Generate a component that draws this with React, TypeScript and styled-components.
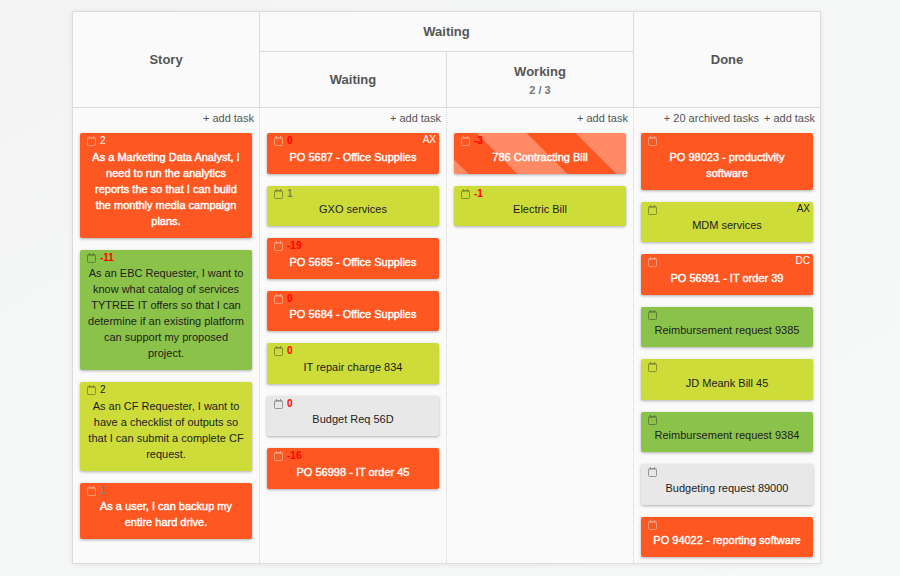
import React from "react";
import styled, { createGlobalStyle, css } from "styled-components";

type Tone = "orange" | "green" | "lime" | "grey";
type DueTone = "plain" | "muted" | "late";

interface Task {
  title: string;
  tone: Tone;
  due?: string;
  dueTone?: DueTone;
  owner?: string;
  blocked?: boolean;
}

interface Column {
  id: string;
  archived?: string;
  tasks: Task[];
}

const columns: Column[] = [
  {
    id: "Story",
    tasks: [
      {
        title:
          "As a Marketing Data Analyst, I need to run the analytics reports the so that I can build the monthly media campaign plans.",
        tone: "orange",
        due: "2",
      },
      {
        title:
          "As an EBC Requester, I want to know what catalog of services TYTREE IT offers so that I can determine if an existing platform can support my proposed project.",
        tone: "green",
        due: "-11",
        dueTone: "late",
      },
      {
        title:
          "As an CF Requester, I want to have a checklist of outputs so that I can submit a complete CF request.",
        tone: "lime",
        due: "2",
      },
      {
        title: "As a user, I can backup my entire hard drive.",
        tone: "orange",
        due: "1",
        dueTone: "muted",
      },
    ],
  },
  {
    id: "Waiting",
    tasks: [
      { title: "PO 5687 - Office Supplies", tone: "orange", due: "0", dueTone: "late", owner: "AX" },
      { title: "GXO services", tone: "lime", due: "1", dueTone: "muted" },
      { title: "PO 5685 - Office Supplies", tone: "orange", due: "-19", dueTone: "late" },
      { title: "PO 5684 - Office Supplies", tone: "orange", due: "0", dueTone: "late" },
      { title: "IT repair charge 834", tone: "lime", due: "0", dueTone: "late" },
      { title: "Budget Req 56D", tone: "grey", due: "0", dueTone: "late" },
      { title: "PO 56998 - IT order 45", tone: "orange", due: "-16", dueTone: "late" },
    ],
  },
  {
    id: "Working",
    tasks: [
      { title: "786 Contracting Bill", tone: "orange", due: "-3", dueTone: "late", blocked: true },
      { title: "Electric Bill", tone: "lime", due: "-1", dueTone: "late" },
    ],
  },
  {
    id: "Done",
    archived: "+ 20 archived tasks",
    tasks: [
      { title: "PO 98023 - productivity software", tone: "orange" },
      { title: "MDM services", tone: "lime", owner: "AX" },
      { title: "PO 56991 - IT order 39", tone: "orange", owner: "DC" },
      { title: "Reimbursement request 9385", tone: "green" },
      { title: "JD Meank Bill 45", tone: "lime" },
      { title: "Reimbursement request 9384", tone: "green" },
      { title: "Budgeting request 89000", tone: "grey" },
      { title: "PO 94022 - reporting software", tone: "orange" },
    ],
  },
];

const fills: Record<Tone, string> = {
  orange: "#ff5722",
  green: "#8bc34a",
  lime: "#cddc39",
  grey: "#e8e8e8",
};

const GlobalStyle = createGlobalStyle`
  * { box-sizing: border-box; }
  body {
    margin: 0;
    min-height: 100vh;
    background: linear-gradient(150deg, #f3f3f3 0%, #f5f6f6 30%, #f7f8f8 100%);
    font-family: "Liberation Sans", Arial, sans-serif;
    font-size: 11px;
    line-height: 16px;
    color: #555;
  }
`;

const Page = styled.main`
  padding: 11px 79px 12px 72px;
`;

const Board = styled.div`
  display: grid;
  grid-template-columns: repeat(4, minmax(0, 1fr));
  grid-template-rows: 40px 56px auto;
  border: 1px solid #dcdcdc;
  border-left: 0;
  background: #fafafa;
  box-shadow: 0 1px 6px rgba(0, 0, 0, 0.08);
`;

const HeaderCell = styled.header<{ $area: string }>`
  grid-area: ${(p) => p.$area};
  display: flex;
  flex-direction: column;
  align-items: center;
  justify-content: center;
  border-left: 1px solid #dcdcdc;
  border-bottom: 1px solid #dcdcdc;
`;

const Heading = styled.h2`
  margin: 0;
  font-size: 13px;
  line-height: 20px;
  font-weight: bold;
`;

const Limit = styled.span`
  font-weight: bold;
  color: #777;
`;

const Lane = styled.section`
  padding: 0 7px 6px;
  border-left: 1px dotted #d4d4d4;

  &:nth-of-type(1) {
    border-left: 1px solid #dcdcdc;
  }
`;

const Actions = styled.div`
  display: flex;
  justify-content: flex-end;
  gap: 5px;
  height: 25px;
  padding-top: 2px;
  margin-right: -2px;
`;

const Action = styled.button`
  height: 16px;
  padding: 0;
  border: 0;
  background: none;
  color: #555;
  font: inherit;
  cursor: pointer;
  white-space: nowrap;
`;

const CardList = styled.div`
  display: flex;
  flex-direction: column;
  gap: 12px;
`;

const CardTop = styled.div`
  display: flex;
  align-items: center;
  gap: 4px;
  height: 16px;
  font-size: 10px;
`;

const Card = styled.article<{ $tone: Tone; $blocked?: boolean }>`
  padding: 0 7px 9px;
  border-radius: 2px;
  background-color: ${(p) => fills[p.$tone]};
  box-shadow: 0 1px 3px rgba(0, 0, 0, 0.3);
  color: ${(p) => (p.$tone === "orange" ? "#fff" : "#222")};
  ${(p) =>
    p.$blocked &&
    css`
      background-image: repeating-linear-gradient(
        45deg,
        rgba(255, 255, 255, 0.3) 0 10px,
        transparent 10px 45px,
        rgba(255, 255, 255, 0.3) 45px 70px
      );
    `}

  &:nth-child(even) ${CardTop} {
    height: 15px;
  }
`;

const CardTitle = styled.p<{ $light: boolean }>`
  margin: 0;
  padding: 0 1px;
  text-align: center;
  -webkit-text-stroke: ${(p) => (p.$light ? "0.4px #fff" : "0")};
`;

const dueColors: Record<DueTone, string> = {
  plain: "inherit",
  muted: "#808066",
  late: "#f00",
};

const Due = styled.span<{ $tone: DueTone }>`
  color: ${(p) => dueColors[p.$tone]};
  font-weight: ${(p) => (p.$tone === "plain" ? "normal" : "bold")};
`;

const Owner = styled.span`
  margin-left: auto;
  margin-right: -4px;
  line-height: 14px;
  align-self: flex-start;
`;

const CalendarIcon = styled.svg`
  flex: none;
  width: 9px;
  height: 10px;
  opacity: 0.45;
`;

function Calendar() {
  return (
    <CalendarIcon viewBox="0 0 9 10" aria-hidden="true">
      <rect x="0.5" y="1.5" width="8" height="8" rx="1" fill="none" stroke="currentColor" strokeWidth="0.9" />
      <path d="M1 2h7v1H1Z" fill="currentColor" opacity="0.6" />
      <path d="M2.5 0v2.4M6.5 0v2.4" stroke="currentColor" strokeWidth="1" />
    </CalendarIcon>
  );
}

function TaskCard({ task }: { task: Task }) {
  return (
    <Card $tone={task.tone} $blocked={task.blocked}>
      <CardTop>
        <Calendar />
        {task.due && <Due $tone={task.dueTone ?? "plain"}>{task.due}</Due>}
        {task.owner && <Owner>{task.owner}</Owner>}
      </CardTop>
      <CardTitle $light={task.tone === "orange"}>{task.title}</CardTitle>
    </Card>
  );
}

export default function App() {
  return (
    <>
      <GlobalStyle />
      <Page>
        <Board>
          <HeaderCell $area="1 / 1 / 3 / 2">
            <Heading>Story</Heading>
          </HeaderCell>
          <HeaderCell $area="1 / 2 / 2 / 4">
            <Heading>Waiting</Heading>
          </HeaderCell>
          <HeaderCell $area="2 / 2 / 3 / 3">
            <Heading>Waiting</Heading>
          </HeaderCell>
          <HeaderCell $area="2 / 3 / 3 / 4">
            <Heading>Working</Heading>
            <Limit>2 / 3</Limit>
          </HeaderCell>
          <HeaderCell $area="1 / 4 / 3 / 5">
            <Heading>Done</Heading>
          </HeaderCell>
          {columns.map((column) => (
            <Lane key={column.id} aria-label={column.id}>
              <Actions>
                {column.archived && <Action type="button">{column.archived}</Action>}
                <Action type="button">+ add task</Action>
              </Actions>
              <CardList>
                {column.tasks.map((task) => (
                  <TaskCard key={task.title} task={task} />
                ))}
              </CardList>
            </Lane>
          ))}
        </Board>
      </Page>
    </>
  );
}
